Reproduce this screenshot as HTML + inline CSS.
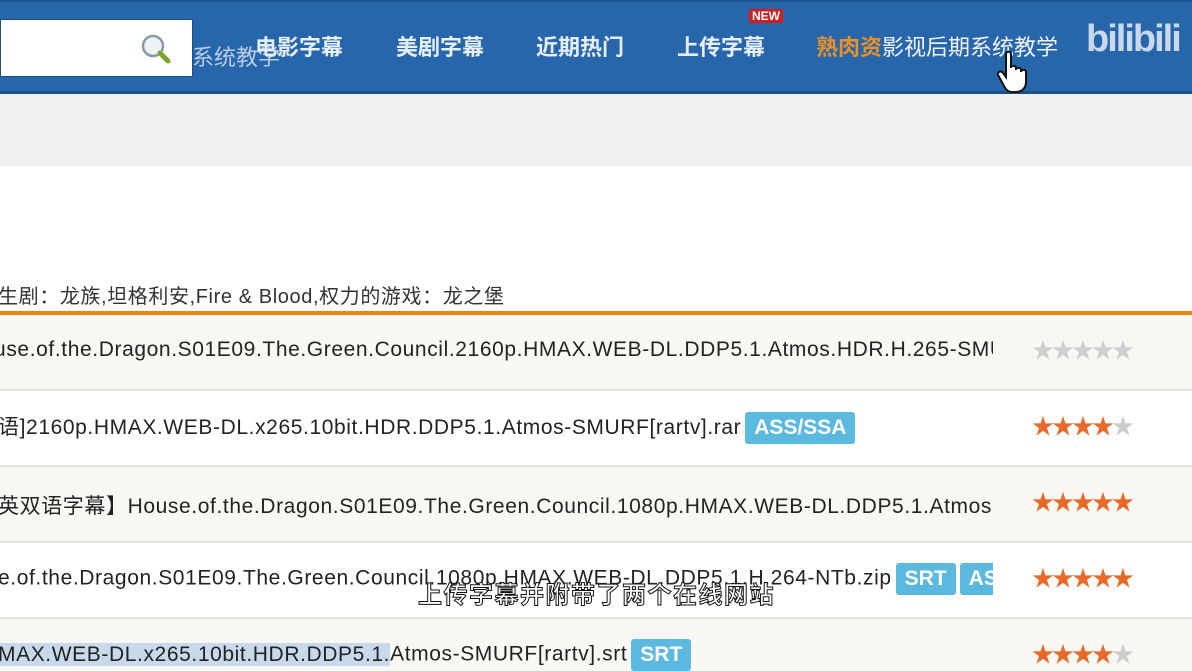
<!DOCTYPE html>
<html><head><meta charset="utf-8"><style>
*{margin:0;padding:0;box-sizing:border-box}
html,body{width:1192px;height:671px;overflow:hidden}
body{background:#fff;font-family:"Liberation Sans","Noto Sans CJK SC",sans-serif;position:relative}
.nav{position:absolute;left:0;top:0;width:1192px;height:94px;background:#2866ab;border-bottom:3px solid #1b4f8a;border-top:2px solid #1d5595}
.search{position:absolute;left:0;top:17px;width:193px;height:58px;background:#fff;border:1px solid #1b4f8a}
.nv{position:absolute;top:28px;color:#e6eef8;font-size:22px;font-weight:bold;white-space:nowrap;font-family:"Noto Sans CJK SC",sans-serif}
.gray{position:absolute;left:0;top:94px;width:1192px;height:72px;background:#f0f0ee}
.info{position:absolute;left:-2px;top:280px;font-size:20px;letter-spacing:0.6px;color:#333;white-space:nowrap}
.orange{position:absolute;left:0;top:311px;width:1192px;height:4px;background:#e8860f}
.row{position:absolute;left:0;width:1192px;height:76px;border-bottom:2px solid #e2e2e0}
.row .t{position:absolute;left:-2px;top:23px;width:995px;overflow:hidden;white-space:nowrap;font-size:21px;letter-spacing:0.6px;color:#222}
.tag{display:inline-block;background:#5bb8df;color:#fff;font-weight:bold;padding:2px 9px;border-radius:3px;margin-left:4px;font-size:21px;letter-spacing:0;vertical-align:middle;line-height:28px}
.stars{position:absolute;left:1032px;top:18px;font-size:22px;letter-spacing:-2px;color:#e8692a}
.stars.g{color:#cfcfcf}
.sub{position:absolute;left:418px;top:575px;font-size:24px;letter-spacing:1.5px;color:#fff;font-weight:bold;-webkit-text-stroke:1px #111;font-family:"Noto Sans CJK SC",sans-serif;white-space:nowrap}
</style></head><body>
<div class="nav">
<div class="search"><svg style="position:absolute;left:138px;top:12px" width="34" height="34"><circle cx="14" cy="14" r="10" fill="#eef3f7" stroke="#8a99a8" stroke-width="2.5"/><path d="M21 21l8 8" stroke="#7ba52a" stroke-width="5" stroke-linecap="round"/></svg></div>
<div class="nv" style="left:192px;top:38px;font-weight:normal;color:#b9cde6">系统教学</div>
<div class="nv" style="left:255px">电影字幕</div>
<div class="nv" style="left:396px">美剧字幕</div>
<div class="nv" style="left:536px">近期热门</div>
<div class="nv" style="left:677px">上传字幕</div>
<div style="position:absolute;left:749px;top:7px;background:#d11f1f;color:#fff;font-size:12px;font-weight:bold;padding:0 3px;border-radius:2px">NEW</div>
<div class="nv" style="left:816px;color:#e8902a">熟肉资</div>
<div class="nv" style="left:882px;font-weight:normal;color:#f0f4fa">影视后期系统教学</div>
<div class="nv" style="left:1086px;top:16px;font-size:38px;font-weight:bold;color:#c9d8ea;letter-spacing:-2px;font-family:'Liberation Sans',sans-serif">bilibili</div>
<svg style="position:absolute;left:996px;top:48px" width="36" height="46"><path d="M10 4c0-3 5-3 5 0v14c0-3 5-3 5 0v2c0-3 5-3 5 0v2c0-3 5-3 5 0v10c0 6-4 10-10 10h-4c-5 0-7-4-9-8l-5-9c-1-3 3-5 5-2l3 4z" fill="#fff" stroke="#111" stroke-width="2"/></svg>
</div>
<div class="gray"></div>
<div class="info">生剧：龙族,坦格利安,Fire &amp; Blood,权力的游戏：龙之堡</div>
<div class="orange"></div>
<div class="row" style="top:315px;background:#f8f7f3"><div class="t" style="left:-34px;width:1027px">House.of.the.Dragon.S01E09.The.Green.Council.2160p.HMAX.WEB-DL.DDP5.1.Atmos.HDR.H.265-SMURF</div><div class="stars g">★★★★★</div></div>
<div class="row" style="top:391px;background:#fff"><div class="t" style="top:20px">语]2160p.HMAX.WEB-DL.x265.10bit.HDR.DDP5.1.Atmos-SMURF[rartv].rar<span class="tag">ASS/SSA</span></div><div class="stars">★★★★<span style="color:#ccc">★</span></div></div>
<div class="row" style="top:467px;background:#f8f7f3"><div class="t">英双语字幕】House.of.the.Dragon.S01E09.The.Green.Council.1080p.HMAX.WEB-DL.DDP5.1.Atmos.H.264</div><div class="stars">★★★★★</div></div>
<div class="row" style="top:543px;background:#fff"><div class="t" style="top:20px">e.of.the.Dragon.S01E09.The.Green.Council.1080p.HMAX.WEB-DL.DDP5.1.H.264-NTb.zip<span class="tag">SRT</span><span class="tag">ASS</span></div><div class="stars">★★★★★</div></div>
<div class="row" style="top:619px;background:#f8f7f3;border:none"><div class="t" style="top:20px"><span style="background:#c9d9ec">MAX.WEB-DL.x265.10bit.HDR.DDP5.1.</span>Atmos-SMURF[rartv].srt<span class="tag">SRT</span></div><div class="stars">★★★★<span style="color:#ccc">★</span></div></div>
<div class="sub">上传字幕并附带了两个在线网站</div>
</body></html>
